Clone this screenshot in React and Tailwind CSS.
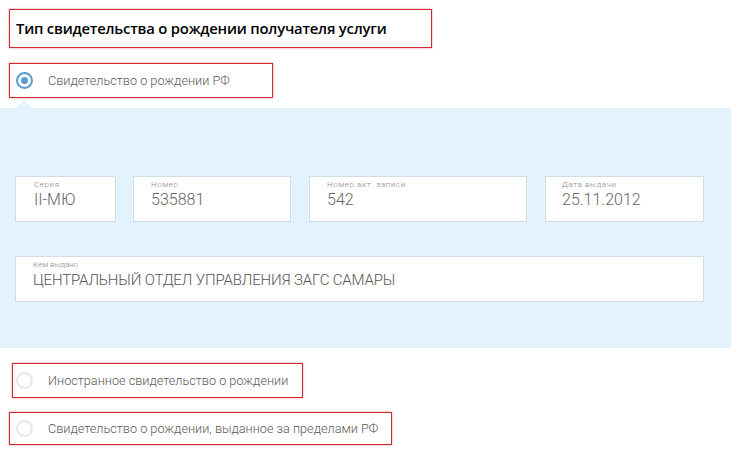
const Radio = ({ checked }) => (
  <span
    className={
      "flex h-[17px] w-[17px] shrink-0 items-center justify-center rounded-full border-2 bg-white " +
      (checked ? "border-[#5b9ccf]" : "border-[#e6e6e6]")
    }
  >
    {checked && <span className="h-[7px] w-[7px] rounded-full bg-[#5b9ccf]" />}
  </span>
);

const Field = ({ label, value, className }) => (
  <div className={"flex h-[46px] flex-col border border-[#cfdde6] bg-white pt-[3px] " + className}>
    <span className="font-['Roboto',sans-serif] text-[8px] font-light leading-[10px] tracking-[0.6px] text-[#888]">
      {label}
    </span>
    <span className="font-['Roboto',sans-serif] text-[16px] font-light leading-[19px] text-[#666]">
      {value}
    </span>
  </div>
);

const App = () => {
  return (
    <div className="relative h-[474px] w-[750px] overflow-hidden bg-white font-['Liberation_Sans',Arial,sans-serif]">
      <div className="pt-[9px] pl-[9px]">
        <div className="flex h-[39px] w-[423px] items-center border border-[#cf2a33] pl-[6px] shadow-[0_0_2px_rgba(207,42,51,0.5)]">
          <span className="font-['Open_Sans',sans-serif] text-[14.8px] font-semibold tracking-[-0.2px] text-black">
            Тип свидетельства о рождении получателя услуги
          </span>
        </div>
        <div className="mt-[15px] flex h-[35px] w-[264px] items-center gap-[15px] border border-[#cf2a33] pl-[6px] shadow-[0_0_2px_rgba(207,42,51,0.5)]">
          <Radio checked />
          <span className="font-['Roboto',sans-serif] text-[12.7px] font-light text-[#5a5a5a]">
            Свидетельство о рождении РФ
          </span>
        </div>
      </div>

      <div className="ml-[16px] mt-[2px] h-0 w-0 border-x-[8px] border-b-[8px] border-x-transparent border-b-[#e2f3fd]" />

      <div className="flex h-[240px] w-[731px] flex-col bg-[#e2f3fd] pt-[68px] pl-[15px]">
        <div className="flex">
          <Field label="Серия" value="II-МЮ" className="w-[101px] pl-[18px]" />
          <Field label="Номер" value="535881" className="ml-[17px] w-[158px] pl-[17px]" />
          <Field label="Номер акт. записи" value="542" className="ml-[18px] w-[218px] pl-[17px]" />
          <Field label="Дата выдачи" value="25.11.2012" className="ml-[18px] w-[159px] pl-[16px]" />
        </div>
        <div className="mt-[34px] flex h-[46px] w-[689px] flex-col border border-[#cfdde6] bg-white pt-[3px] pl-[17px]">
          <span className="font-['Roboto',sans-serif] text-[8px] font-light leading-[10px] text-[#888]">Кем выдано</span>
          <span className="mt-[1px] font-['Roboto',sans-serif] text-[15px] font-light leading-[18px] tracking-[-0.15px] text-[#555]">
            ЦЕНТРАЛЬНЫЙ ОТДЕЛ УПРАВЛЕНИЯ ЗАГС САМАРЫ
          </span>
        </div>
      </div>

      <div className="pl-[9px]">
        <div className="mt-[15px] ml-[3px] flex h-[35px] w-[291px] items-center gap-[15px] border border-[#cf2a33] pl-[3px] shadow-[0_0_2px_rgba(207,42,51,0.5)]">
          <Radio />
          <span className="font-['Roboto',sans-serif] text-[12.7px] font-light text-[#5a5a5a]">
            Иностранное свидетельство о рождении
          </span>
        </div>
        <div className="mt-[14px] flex h-[33px] w-[383px] items-center gap-[15px] border border-[#cf2a33] pl-[6px] shadow-[0_0_2px_rgba(207,42,51,0.5)]">
          <Radio />
          <span className="font-['Roboto',sans-serif] text-[12.7px] font-light text-[#5a5a5a]">
            Свидетельство о рождении, выданное за пределами РФ
          </span>
        </div>
      </div>
    </div>
  );
};

export default App;
